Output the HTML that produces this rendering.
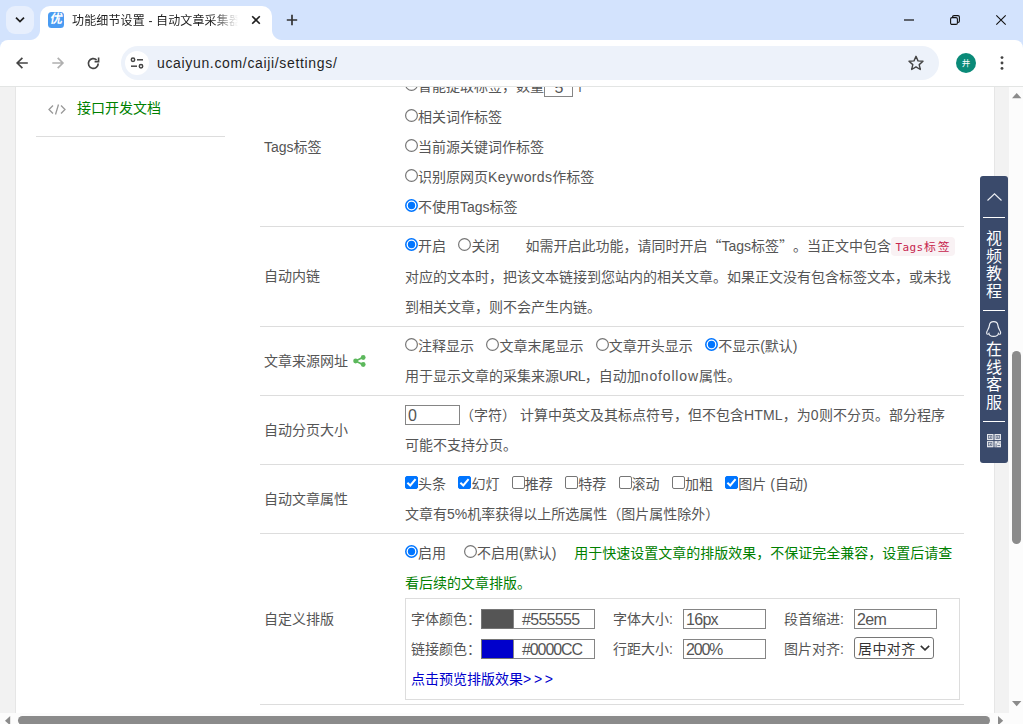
<!DOCTYPE html>
<html lang="zh-CN">
<head>
<meta charset="utf-8">
<title>功能细节设置 - 自动文章采集器</title>
<style>
*{box-sizing:border-box;margin:0;padding:0}
html,body{width:1023px;height:724px;overflow:hidden;background:#fff}
body{position:relative;font-family:"Liberation Sans","Noto Sans CJK SC",sans-serif;font-size:14px;color:#555}
.abs{position:absolute}
/* ---------- browser chrome ---------- */
#tabstrip{position:absolute;left:0;top:0;width:1023px;height:50px;background:#d3e3fd}
#toolbar{position:absolute;left:0;top:40px;width:1023px;height:46px;background:#fff;border-radius:8px 8px 0 0}
#tbline{position:absolute;left:0;top:86px;width:1023px;height:1px;background:#e3e5e4}
#tabsearch{position:absolute;left:6px;top:6px;width:28px;height:28px;border-radius:9px;background:#e7effd}
#tab{position:absolute;left:40px;top:6px;width:232px;height:34px;background:#fff;border-radius:10px 10px 0 0}
#tab:before,#tab:after{content:"";position:absolute;bottom:0;width:10px;height:10px}
#tab:before{left:-10px;background:radial-gradient(circle at 0 0,rgba(255,255,255,0) 9.5px,#fff 10.5px)}
#tab:after{right:-10px;background:radial-gradient(circle at 100% 0,rgba(255,255,255,0) 9.5px,#fff 10.5px)}
#favicon{position:absolute;left:48px;top:12px;width:16px;height:16px;border-radius:3.5px;background:#4a9bf2;color:#fff;font-size:12.5px;line-height:15px;text-align:center;font-weight:bold;overflow:hidden}
#favicon span{display:inline-block;transform:skewX(-10deg)}
#tabtitle{position:absolute;left:72px;top:11px;letter-spacing:.15px;width:166px;height:20px;line-height:20px;font-size:12px;color:#1f1f1f;white-space:nowrap;overflow:hidden;-webkit-mask-image:linear-gradient(90deg,#000 140px,transparent 166px);mask-image:linear-gradient(90deg,#000 140px,transparent 166px)}
#omni{position:absolute;left:121px;top:46px;width:818px;height:34px;border-radius:17px;background:#edf2fa}
#siteinfo{position:absolute;left:125px;top:51px;width:24px;height:24px;border-radius:12px;background:#fff}
#url{position:absolute;left:157px;top:53px;height:20px;line-height:20px;font-size:14px;color:#1f1f1f;white-space:nowrap;letter-spacing:0.66px}
#avatar{position:absolute;left:956px;top:53px;width:20px;height:20px;border-radius:10px;background:#0a8a78;color:#fff;font-size:8.5px;line-height:20px;text-align:center}
svg{position:absolute;overflow:visible}
/* ---------- page ---------- */
#page{position:absolute;left:0;top:87px;width:1009px;height:626px;background:#f2f2f2;overflow:hidden}
#white{position:absolute;left:15px;top:0;width:980px;height:626px;background:#fff;border-left:1px solid #e6e6e6;border-right:1px solid #e6e6e6}
.hl{position:absolute;height:1px;background:#ddd}
.t{position:absolute;white-space:nowrap;height:30px;line-height:30px;font-size:14px;color:#555}
.g{color:#008000}
.rad{position:absolute;width:13px;height:13px;border-radius:50%;border:1px solid #767676;background:#fff}
.rad.on{border-color:#0075ff}
.rad.on:after{content:"";position:absolute;left:2px;top:2px;width:7px;height:7px;border-radius:50%;background:#0075ff}
.cb{position:absolute;width:13px;height:13px;border-radius:2px;border:1px solid #767676;background:#fff}
.cb.on{border-color:#0075ff;background:#0075ff}
.inp{position:absolute;border:1px solid #767676;background:#fff;font-size:16px;color:#555;line-height:18px;padding-left:3px;white-space:nowrap;overflow:hidden}

i.r,i.c{display:inline-block;width:13px;height:13px;vertical-align:0px;position:relative;border:1px solid #767676;background:#fff}
i.r{border-radius:50%;border:0;background:radial-gradient(circle closest-side,#fff 76%,#767676 84%,#767676 94%,rgba(118,118,118,0) 100%)}
i.r.on{border:0;background:radial-gradient(circle closest-side,#0075ff 56%,#fff 63%,#fff 72%,#0075ff 79%,#0075ff 94%,rgba(0,117,255,0) 100%)}
i.c{border-radius:2px}
i.c.on{border-color:#0075ff;background:#0075ff}
.ib{display:inline-block;vertical-align:middle;border:1px solid #858585;background:#fff;font-size:16px;color:#555;line-height:19px;padding-left:2px;white-space:nowrap;overflow:hidden;letter-spacing:-0.7px}
code{font-family:"Liberation Sans","Noto Sans CJK SC",sans-serif;font-size:12.6px;color:#c7254e;background:#f9f2f4;border-radius:4px;padding:3.2px 3px 1px 4.6px}

b.q{display:inline-block;width:14px;line-height:0;font-weight:normal;font-family:"Noto Sans CJK SC",sans-serif}
.w{display:inline-block;white-space:nowrap}
code,code span{line-height:15px}
code .cl{font-family:"DejaVu Sans Mono","Liberation Mono",monospace;font-size:11px;letter-spacing:.31px}
code .cc{font-size:11.8px;letter-spacing:2.06px;margin-left:.6px}
.sel{font-size:14px;line-height:20px;color:#333;border-radius:3px;border-color:#767676;padding-left:3px;padding-top:1px;position:absolute;letter-spacing:.4px}
svg.rd{position:relative;display:inline-block;vertical-align:0;overflow:visible}
/* scrollbars */
#vsb{position:absolute;left:1009px;top:87px;width:14px;height:626px;background:#fcfcfc}
#hsb{position:absolute;left:0;top:713px;width:1009px;height:15px;background:#fcfcfc}
#corner{position:absolute;left:1009px;top:713px;width:14px;height:15px;background:#fcfcfc}

#fp{position:absolute;left:980px;top:176px;width:28px;height:287px;background:#3a4a6b;border-radius:3px;color:#fff}
#fp .sep{position:absolute;left:3px;width:22px;height:1px;background:#fff}
#fp .vt{position:absolute;left:0;width:28px;text-align:center;font-size:16px;line-height:17.6px;color:#fff}
#vsb .th{position:absolute;left:3px;top:264px;width:9px;height:193px;border-radius:5px;background:#8b8b8b}
#hsb .th{position:absolute;left:18px;top:3px;width:972px;height:9px;border-radius:5px;background:#8b8b8b}
i.au,i.ad,i.al,i.ar{position:absolute;width:0;height:0;border:5px solid transparent}
i.au{left:3px;top:1px;border-bottom:5px solid #8b8b8b;border-top-width:0;border-left-width:4.5px;border-right-width:4.5px;top:6px}
i.ad{left:3px;bottom:7px;border-top:5px solid #8b8b8b;border-bottom-width:0;border-left-width:4.5px;border-right-width:4.5px}
i.al{left:5px;top:3px;border-right:5px solid #8b8b8b;border-left-width:0;border-top-width:4.5px;border-bottom-width:4.5px}
i.ar{left:998px;top:3px;border-left:5px solid #8b8b8b;border-right-width:0;border-top-width:4.5px;border-bottom-width:4.5px}
</style>
</head>
<body>
<!-- ======= browser chrome ======= -->
<div id="tabstrip"></div>
<div id="tabsearch"></div>
<div id="tab"></div>
<div id="favicon"><span>优</span></div>
<div id="tabtitle">功能细节设置 - 自动文章采集器</div>
<div id="toolbar"></div>
<div id="omni"></div>
<div id="siteinfo"></div>
<div id="url">ucaiyun.com/caiji/settings/</div>
<div id="avatar">井</div>

<!-- chrome icons -->
<svg style="left:15px;top:16px" width="10" height="8" viewBox="0 0 10 8" fill="none" stroke="#1f1f1f" stroke-width="1.7"><path d="M1 1.6 L5 5.6 L9 1.6"/></svg>
<svg style="left:251px;top:15px" width="10" height="10" viewBox="0 0 10 10" fill="none" stroke="#1f1f1f" stroke-width="1.6"><path d="M1.2 1.2 L8.8 8.8 M8.8 1.2 L1.2 8.8"/></svg>
<svg style="left:286px;top:14px" width="12" height="12" viewBox="0 0 12 12" fill="none" stroke="#333" stroke-width="1.7"><path d="M6 0.8 V11.2 M0.8 6 H11.2"/></svg>
<svg style="left:904px;top:19px" width="10" height="2" viewBox="0 0 10 2"><rect x="0" y="0.4" width="10" height="1.2" fill="#111"/></svg>
<svg style="left:950px;top:15px" width="10" height="10" viewBox="0 0 10 10" fill="none" stroke="#111" stroke-width="1.1"><rect x="0.6" y="2.6" width="6.8" height="6.8" rx="1.4"/><path d="M2.6 2.4 V2 Q2.6 0.6 4 0.6 H8 Q9.4 0.6 9.4 2 V6 Q9.4 7.4 8 7.4 H7.6"/></svg>
<svg style="left:996px;top:15px" width="10" height="10" viewBox="0 0 10 10" fill="none" stroke="#111" stroke-width="1.1"><path d="M0.3 0.3 L9.7 9.7 M9.7 0.3 L0.3 9.7"/></svg>
<!-- nav -->
<svg style="left:16px;top:57px" width="13" height="12" viewBox="0 0 13 12" fill="none" stroke="#444" stroke-width="1.7"><path d="M11.8 6 H1.8 M6.4 0.8 L1.2 6 L6.4 11.2"/></svg>
<svg style="left:52px;top:57px" width="13" height="12" viewBox="0 0 13 12" fill="none" stroke="#b0b0b0" stroke-width="1.7"><path d="M0.3 6 H10.3 M5.7 0.8 L10.9 6 L5.7 11.2"/></svg>
<svg style="left:87.4px;top:57px" width="13" height="13" viewBox="0 0 13 13" fill="none" stroke="#444" stroke-width="1.7"><path d="M11.2 6.5 A4.9 4.9 0 1 1 9.6 2.9"/><path d="M11.6 0.6 V4.6 H7.6" stroke-width="1.6"/></svg>
<svg style="left:130px;top:57px" width="14" height="12" viewBox="0 0 14 12" fill="none" stroke="#444" stroke-width="1.5"><circle cx="3" cy="2.8" r="1.7"/><path d="M7 2.8 H13"/><circle cx="11" cy="9.2" r="1.7"/><path d="M1 9.2 H7"/></svg>
<svg style="left:908px;top:55px" width="16" height="16" viewBox="0 0 16 16" fill="none" stroke="#444" stroke-width="1.4" stroke-linejoin="round"><path d="M8 1.3 L10 5.9 L15 6.3 L11.2 9.6 L12.3 14.5 L8 11.9 L3.7 14.5 L4.8 9.6 L1 6.3 L6 5.9 Z"/></svg>
<svg style="left:1000px;top:56px" width="4" height="14" viewBox="0 0 4 14" fill="#444"><circle cx="2" cy="1.6" r="1.45"/><circle cx="2" cy="7" r="1.45"/><circle cx="2" cy="12.4" r="1.45"/></svg>
<div id="tbline"></div>

<!-- ======= page ======= -->
<div id="page">
<div id="white"></div>

<!-- sidebar -->
<svg style="left:48px;top:17px" width="18" height="11" viewBox="0 0 18 11" fill="none" stroke="#999" stroke-width="1.3"><path d="M5 1.5 L1 5.5 L5 9.5 M13 1.5 L17 5.5 L13 9.5 M10.5 0.5 L7.5 10.5"/></svg>
<div class="t g" style="left:77px;top:6px">接口开发文档</div>
<div class="hl" style="left:36px;top:49px;width:189px"></div>

<!-- table borders -->
<div class="hl" style="left:260px;top:139px;width:704px"></div>
<div class="hl" style="left:260px;top:239px;width:704px"></div>
<div class="hl" style="left:260px;top:308px;width:704px"></div>
<div class="hl" style="left:260px;top:377px;width:704px"></div>
<div class="hl" style="left:260px;top:446px;width:704px"></div>
<div class="hl" style="left:260px;top:617px;width:704px"></div>

<!-- row 1 : Tags -->
<div class="t" style="left:264px;top:45px">Tags标签</div>
<div class="t" style="left:405px;top:-16px"><svg class="rd" width="13" height="13" viewBox="0 0 13 13"><circle cx="6.5" cy="6.5" r="5.9" fill="#fff" stroke="#767676" stroke-width="1.2"/></svg>智能提取标签，数量<span class="ib" style="width:29px;height:20px;text-align:center;padding-left:0">5</span>个</div>
<div class="t" style="left:405px;top:15px"><svg class="rd" width="13" height="13" viewBox="0 0 13 13"><circle cx="6.5" cy="6.5" r="5.9" fill="#fff" stroke="#767676" stroke-width="1.2"/></svg>相关词作标签</div>
<div class="t" style="left:405px;top:45px"><svg class="rd" width="13" height="13" viewBox="0 0 13 13"><circle cx="6.5" cy="6.5" r="5.9" fill="#fff" stroke="#767676" stroke-width="1.2"/></svg>当前源关键词作标签</div>
<div class="t" style="left:405px;top:75px"><svg class="rd" width="13" height="13" viewBox="0 0 13 13"><circle cx="6.5" cy="6.5" r="5.9" fill="#fff" stroke="#767676" stroke-width="1.2"/></svg>识别原网页<span style="letter-spacing:.35px">Keywords</span>作标签</div>
<div class="t" style="left:405px;top:105px"><svg class="rd" width="13" height="13" viewBox="0 0 13 13"><circle cx="6.5" cy="6.5" r="5.7" fill="#fff" stroke="#0075ff" stroke-width="1.55"/><circle cx="6.5" cy="6.5" r="3.65" fill="#0075ff"/></svg>不使用Tags标签</div>

<!-- row 2 : 自动内链 -->
<div class="t" style="left:264px;top:174px">自动内链</div>
<div class="t" style="left:405px;top:144px"><svg class="rd" width="13" height="13" viewBox="0 0 13 13"><circle cx="6.5" cy="6.5" r="5.7" fill="#fff" stroke="#0075ff" stroke-width="1.55"/><circle cx="6.5" cy="6.5" r="3.65" fill="#0075ff"/></svg>开启<svg class="rd" style="margin-left:12.4px" width="13" height="13" viewBox="0 0 13 13"><circle cx="6.5" cy="6.5" r="5.9" fill="#fff" stroke="#767676" stroke-width="1.2"/></svg>关闭<span style="margin-left:26px">如需开启此功能，请同时开启<b class="q" style="text-align:right">“</b>Tags标签<b class="q" style="text-align:left">”</b>。当正文中包含</span><code style="position:absolute;left:486px;top:6px;height:19px;width:64px"><span class="cl">Tags</span><span class="cc">标签</span></code></div>
<div class="t" style="left:405px;top:175px">对应的文本时，把该文本链接到您站内的相关文章。如果正文没有包含标签文本，或未找</div>
<div class="t" style="left:405px;top:205px">到相关文章，则不会产生内链。</div>

<!-- row 3 : 文章来源网址 -->
<div class="t" style="left:264px;top:259px">文章来源网址</div>
<svg style="left:353px;top:268px" width="13" height="12" viewBox="0 0 13 12" fill="#5cb85c" stroke="#5cb85c"><path d="M2.6 6 L10.2 2.3 M2.6 6 L10.2 9.7" stroke-width="1.8" fill="none"/><circle cx="2.6" cy="6" r="2.4" stroke="none"/><circle cx="10.2" cy="2.5" r="2.4" stroke="none"/><circle cx="10.2" cy="9.5" r="2.4" stroke="none"/></svg>
<div class="t" style="left:405px;top:244px"><svg class="rd" width="13" height="13" viewBox="0 0 13 13"><circle cx="6.5" cy="6.5" r="5.9" fill="#fff" stroke="#767676" stroke-width="1.2"/></svg>注释显示<svg class="rd" style="margin-left:12.4px" width="13" height="13" viewBox="0 0 13 13"><circle cx="6.5" cy="6.5" r="5.9" fill="#fff" stroke="#767676" stroke-width="1.2"/></svg>文章末尾显示<svg class="rd" style="margin-left:12.4px" width="13" height="13" viewBox="0 0 13 13"><circle cx="6.5" cy="6.5" r="5.9" fill="#fff" stroke="#767676" stroke-width="1.2"/></svg>文章开头显示<svg class="rd" style="margin-left:12.4px" width="13" height="13" viewBox="0 0 13 13"><circle cx="6.5" cy="6.5" r="5.7" fill="#fff" stroke="#0075ff" stroke-width="1.55"/><circle cx="6.5" cy="6.5" r="3.65" fill="#0075ff"/></svg>不显示(默认)</div>
<div class="t" style="left:405px;top:274px">用于显示文章的采集来源<span style="letter-spacing:-.75px">URL</span>，自动加<span style="letter-spacing:.85px">nofollow</span>属性。</div>

<!-- row 4 : 自动分页大小 -->
<div class="t" style="left:264px;top:328px">自动分页大小</div>
<div class="t" style="left:405px;top:313px"><span class="ib" style="width:55px;height:20px;position:relative;top:-1.3px">0</span><span>（字符） 计算中英文及其标点符号，但不包含<span style="letter-spacing:.2px">HTML</span>，为<span style="letter-spacing:.3px">0</span>则不分页。部分程序</span></div>
<div class="t" style="left:405px;top:343px">可能不支持分页。</div>

<!-- row 5 : 自动文章属性 -->
<div class="t" style="left:264px;top:397px">自动文章属性</div>
<div class="t" style="left:405px;top:382px"><i class="c on"><svg style="left:-1px;top:-1px" width="13" height="13" viewBox="0 0 13 13" fill="none" stroke="#fff" stroke-width="2"><path d="M2.4 6.7 L5.3 9.5 L10.6 3.1"/></svg></i>头条<i class="c on" style="margin-left:12.4px"><svg style="left:-1px;top:-1px" width="13" height="13" viewBox="0 0 13 13" fill="none" stroke="#fff" stroke-width="2"><path d="M2.4 6.7 L5.3 9.5 L10.6 3.1"/></svg></i>幻灯<i class="c" style="margin-left:12.4px"></i>推荐<i class="c" style="margin-left:12.4px"></i>特荐<i class="c" style="margin-left:12.4px"></i>滚动<i class="c" style="margin-left:12.4px"></i>加粗<i class="c on" style="margin-left:12.4px"><svg style="left:-1px;top:-1px" width="13" height="13" viewBox="0 0 13 13" fill="none" stroke="#fff" stroke-width="2"><path d="M2.4 6.7 L5.3 9.5 L10.6 3.1"/></svg></i>图片 (自动)</div>
<div class="t" style="left:405px;top:412px">文章有5%机率获得以上所选属性（图片属性除外）</div>

<!-- row 6 : 自定义排版 -->
<div class="t" style="left:264px;top:517px">自定义排版</div>
<div class="t" style="left:405px;top:451px"><svg class="rd" width="13" height="13" viewBox="0 0 13 13"><circle cx="6.5" cy="6.5" r="5.7" fill="#fff" stroke="#0075ff" stroke-width="1.55"/><circle cx="6.5" cy="6.5" r="3.65" fill="#0075ff"/></svg>启用<svg class="rd" style="margin-left:18px" width="13" height="13" viewBox="0 0 13 13"><circle cx="6.5" cy="6.5" r="5.9" fill="#fff" stroke="#767676" stroke-width="1.2"/></svg>不启用(默认)<span class="g" style="margin-left:18px">用于快速设置文章的排版效果，不保证完全兼容，设置后请查</span></div>
<div class="t g" style="left:405px;top:481px">看后续的文章排版。</div>
<div class="abs" style="left:405px;top:511px;width:555px;height:102px;border:1px solid #ddd"></div>
<div class="t" style="left:411px;top:517px">字体颜色：</div>
<div class="abs" style="left:481px;top:522px;width:33px;height:20px;background:#555;border:1px solid #767676"></div>
<div class="ib abs" style="left:513px;top:522px;width:82px;height:20px;padding-left:8px">#555555</div>
<div class="t" style="left:613px;top:517px">字体大小:</div>
<div class="ib abs" style="left:683px;top:522px;width:83px;height:20px">16px</div>
<div class="t" style="left:784px;top:517px">段首缩进:</div>
<div class="ib abs" style="left:854px;top:522px;width:83px;height:20px">2em</div>
<div class="t" style="left:411px;top:547px">链接颜色：</div>
<div class="abs" style="left:481px;top:552px;width:33px;height:20px;background:#0000cc;border:1px solid #767676"></div>
<div class="ib abs" style="left:513px;top:552px;width:82px;height:20px;padding-left:8px;letter-spacing:-1.1px">#0000CC</div>
<div class="t" style="left:613px;top:547px">行距大小:</div>
<div class="ib abs" style="left:683px;top:552px;width:83px;height:20px;letter-spacing:-1.2px">200%</div>
<div class="t" style="left:784px;top:547px">图片对齐:</div>
<div class="ib abs sel" style="left:854px;top:550px;width:80px;height:22px">居中对齐<svg style="left:65px;top:6.8px" width="10" height="6" viewBox="0 0 10 6" fill="none" stroke="#333" stroke-width="1.6"><path d="M0.8 0.8 L5 4.8 L9.2 0.8"/></svg></div>
<div class="t" style="left:411px;top:577px;color:#0000cc">点击预览排版效果<span style="letter-spacing:2.7px">&gt;&gt;&gt;</span></div>
</div>


<!-- floating side panel -->
<div id="fp">
<svg style="left:7px;top:17px" width="15" height="8" viewBox="0 0 15 8" fill="none" stroke="#eceef3" stroke-width="1.15"><path d="M0.5 7.5 L7.5 0.8 L14.5 7.5"/></svg>
<div class="sep" style="top:41px"></div>
<div class="vt" style="top:54.2px">视<br>频<br>教<br>程</div>
<div class="sep" style="top:134px"></div>
<svg style="left:5.8px;top:145px" width="15.3" height="16" viewBox="0 0 15.3 16" fill="none" stroke="#eef0f4" stroke-width="1.15"><path d="M7.65 0.6 C5.2 0.6 3.6 2.2 3.4 4.4 C3.2 6.4 2.6 7.6 1.6 9.2 C0.4 11 0.3 13.2 1.5 13.3 C2.1 13.3 2.6 12.9 2.9 12.5 C3.1 14 4.2 15.4 7.65 15.4 C11.1 15.4 12.2 14 12.4 12.5 C12.7 12.9 13.2 13.3 13.8 13.3 C15 13.2 14.9 11 13.7 9.2 C12.7 7.6 12.1 6.4 11.9 4.4 C11.7 2.2 10.1 0.6 7.65 0.6 Z"/></svg>
<div class="vt" style="top:165px">在<br>线<br>客<br>服</div>
<div class="sep" style="top:245px"></div>
<svg style="left:7px;top:257.8px" width="14.2" height="13.4" viewBox="0 0 14.2 13.4"><g fill="#e6e8ec"><rect x="0" y="0" width="6.5" height="6.1"/><rect x="7.5" y="0" width="6.5" height="6.1"/><rect x="0" y="7.1" width="6.5" height="6.2"/><rect x="7.5" y="7.1" width="6.5" height="6.2"/></g><g fill="none" stroke="#3a4a6b" stroke-width="0.8" opacity=".75"><rect x="1.6" y="1.5" width="3.3" height="3.1"/><rect x="9.1" y="1.5" width="3.3" height="3.1"/><rect x="1.6" y="8.6" width="3.3" height="3.1"/></g><g fill="#3a4a6b"><rect x="2.7" y="2.5" width="1.2" height="1.2"/><rect x="10.2" y="2.5" width="1.2" height="1.2"/><rect x="2.7" y="9.6" width="1.2" height="1.2"/><rect x="8.6" y="9.4" width="1" height="3.9" opacity=".7"/><rect x="10.4" y="7.1" width="1" height="2.2" opacity=".6"/><rect x="10.4" y="11" width="2.6" height="1" opacity=".7"/><rect x="12.4" y="8.4" width="1" height="1.6" opacity=".5"/></g></svg>
</div>
<div id="vsb"><div class="th"></div><svg style="left:2.8px;top:6px" width="9.4" height="5.2" viewBox="0 0 9.4 5.2"><path d="M0 5.2 L4.7 0 L9.4 5.2 Z" fill="#8b8b8b"/></svg><svg style="left:2.8px;top:614px" width="9.4" height="5.2" viewBox="0 0 9.4 5.2"><path d="M0 0 L4.7 5.2 L9.4 0 Z" fill="#8b8b8b"/></svg></div>
<div id="hsb"><div class="th"></div><svg style="left:4.9px;top:2.8px" width="5.2" height="9.4" viewBox="0 0 5.2 9.4"><path d="M5.2 0 L0 4.7 L5.2 9.4 Z" fill="#8b8b8b"/></svg><svg style="left:998px;top:2.8px" width="5.2" height="9.4" viewBox="0 0 5.2 9.4"><path d="M0 0 L5.2 4.7 L0 9.4 Z" fill="#8b8b8b"/></svg></div>
<div id="corner"></div>
</body>
</html>
